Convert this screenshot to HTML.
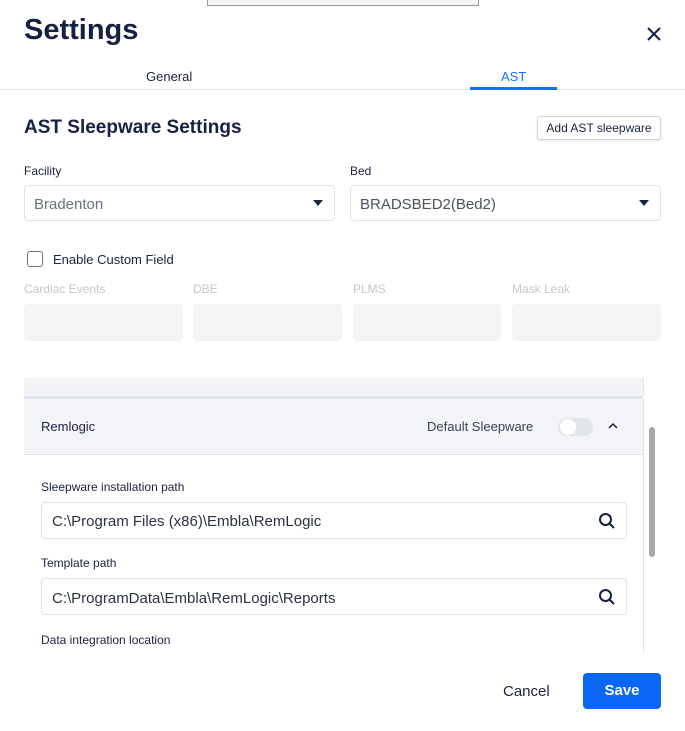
<!DOCTYPE html><html><head><style>
body{margin:0;width:685px;height:731px;overflow:hidden;background:#fff;font-family:"Liberation Sans",sans-serif;color:#1a2340;position:relative}
.a{position:absolute}
.inp{position:absolute;border:1px solid #dfe2ea;border-radius:4px;background:#fff;box-sizing:border-box}
.lbl{position:absolute;font-size:12px;color:#1a2340}
.dis{position:absolute;background:#f3f4f6;border-radius:4px;height:37px;top:304px}
.dl{position:absolute;top:282px;font-size:12px;color:#c4c7ce}
.tri{position:absolute;width:0;height:0;border-left:5px solid transparent;border-right:5px solid transparent;border-top:6px solid #1a2340}
</style></head><body>
<div class="a" style="left:207px;top:0;width:270px;height:5px;border:1px solid #999;border-top:none;background:#f4f4f4"></div>
<div class="a" style="left:24px;top:14px;font-size:29px;font-weight:bold;color:#152042">Settings</div>
<svg class="a" style="left:646px;top:26px" width="16" height="16"><path d="M2 2L14 14M14 2L2 14" stroke="#152042" stroke-width="2"/></svg>
<div class="a" style="left:146px;top:69px;font-size:13px">General</div>
<div class="a" style="left:501px;top:69px;font-size:13px;color:#1a6ef5">AST</div>
<div class="a" style="left:0;top:89px;width:685px;height:1px;background:#dfe2ea"></div>
<div class="a" style="left:470px;top:87px;width:87px;height:3px;background:#1a6ef5"></div>
<div class="a" style="left:24px;top:117px;font-size:19px;font-weight:bold;color:#152042">AST Sleepware Settings</div>
<div class="a" style="left:537px;top:116px;width:122px;height:22px;border:1px solid #cfd3dc;border-radius:3px;font-size:12px;line-height:22px;text-align:center;box-shadow:0 1px 2px rgba(0,0,0,.1)">Add AST sleepware</div>
<div class="lbl" style="left:24px;top:164px">Facility</div>
<div class="lbl" style="left:350px;top:164px">Bed</div>
<div class="inp" style="left:24px;top:185px;width:311px;height:36px"></div>
<div class="a" style="left:34px;top:196px;font-size:15px;color:#6b7180">Bradenton</div>
<div class="tri" style="left:313px;top:200px"></div>
<div class="inp" style="left:350px;top:185px;width:311px;height:36px"></div>
<div class="a" style="left:360px;top:196px;font-size:15px;color:#4b5160">BRADSBED2(Bed2)</div>
<div class="tri" style="left:639px;top:200px"></div>
<div class="a" style="left:27px;top:251px;width:16px;height:16px;border:1.5px solid #6b7180;border-radius:3px;box-sizing:border-box"></div>
<div class="a" style="left:53px;top:252px;font-size:13px">Enable Custom Field</div>
<div class="dl" style="left:24px">Cardiac Events</div><div class="dl" style="left:193px">DBE</div><div class="dl" style="left:353px">PLMS</div><div class="dl" style="left:512px">Mask Leak</div>
<div class="dis" style="left:24px;width:159px"></div><div class="dis" style="left:193px;width:149px"></div><div class="dis" style="left:353px;width:148px"></div><div class="dis" style="left:512px;width:149px"></div>
<div class="a" style="left:24px;top:378px;width:619px;height:18px;background:#f1f3f6;border-right:1px solid #dfe2ea"></div>
<div class="a" style="left:24px;top:396px;width:619px;height:3px;background:#dfe4ec"></div>
<div class="a" style="left:24px;top:399px;width:619px;height:55px;background:#f3f4f7;border-bottom:1px solid #dfe2ea;border-right:1px solid #dfe2ea"></div>
<div class="a" style="left:24px;top:455px;width:619px;height:200px;border-right:1px solid #dfe2ea"></div>
<div class="a" style="left:41px;top:419px;font-size:13px">Remlogic</div>
<div class="a" style="left:427px;top:419px;font-size:13px;color:#3a4256">Default Sleepware</div>
<div class="a" style="left:558px;top:418px;width:35px;height:18px;border-radius:9px;background:#e2e5ea"></div>
<div class="a" style="left:560px;top:419px;width:16px;height:16px;border-radius:8px;background:#fff"></div>
<svg class="a" style="left:607px;top:421px" width="12" height="10"><path d="M2 7L6 3L10 7" stroke="#152042" stroke-width="1.5" fill="none"/></svg>
<div class="a" style="left:649px;top:427px;width:6px;height:130px;border-radius:3px;background:#a9a9a9"></div>
<div class="lbl" style="left:41px;top:480px">Sleepware installation path</div>
<div class="inp" style="left:41px;top:502px;width:586px;height:37px"></div>
<div class="a" style="left:52px;top:513px;font-size:15px;color:#2a3145">C:\Program Files (x86)\Embla\RemLogic</div>
<div class="lbl" style="left:41px;top:556px">Template path</div>
<div class="inp" style="left:41px;top:578px;width:586px;height:37px"></div>
<div class="a" style="left:52px;top:590px;font-size:15px;color:#2a3145">C:\ProgramData\Embla\RemLogic\Reports</div>
<svg class="a" style="left:598px;top:512px" width="18" height="18"><circle cx="7.5" cy="7.5" r="5.5" stroke="#152042" stroke-width="2" fill="none"/><path d="M11.5 11.5L16 16" stroke="#152042" stroke-width="2"/></svg>
<svg class="a" style="left:598px;top:588px" width="18" height="18"><circle cx="7.5" cy="7.5" r="5.5" stroke="#152042" stroke-width="2" fill="none"/><path d="M11.5 11.5L16 16" stroke="#152042" stroke-width="2"/></svg>
<div class="lbl" style="left:41px;top:633px">Data integration location</div>
<div class="a" style="left:0;top:652px;width:685px;height:79px;background:#fff"></div>
<div class="a" style="left:503px;top:683px;font-size:15px">Cancel</div>
<div class="a" style="left:583px;top:673px;width:78px;height:36px;background:#0a66f5;border-radius:4px;color:#fff;font-size:15px;font-weight:bold;text-align:center;line-height:36px">Save</div>
</body></html>
